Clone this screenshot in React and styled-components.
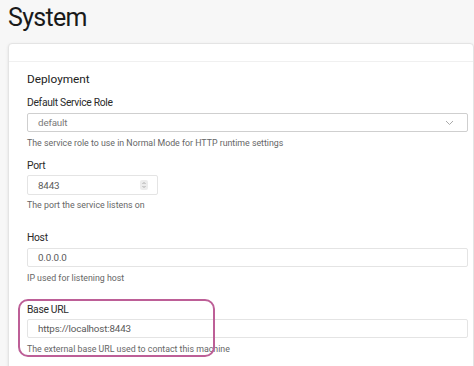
import styled, { createGlobalStyle } from 'styled-components';

const Global = createGlobalStyle`
  html, body {
    margin: 0;
    padding: 0;
    background: #f7f7f7;
    font-family: Roboto, "Liberation Sans", Arial, sans-serif;
    color: #222;
    overflow: hidden;
  }
`;

const Page = styled.div`
  width: 474px;
  height: 366px;
  overflow: hidden;
`;

const Title = styled.h1`
  margin: 0;
  padding: 3px 0 0 8px;
  height: 43px;
  box-sizing: border-box;
  font-size: 25px;
  font-weight: 400;
  line-height: 30px;
  letter-spacing: -0.7px;
  color: #1a1a1a;
`;

const Card = styled.div`
  margin-left: 8px;
  width: 464px;
  height: 400px;
  background: #fff;
  border: 1px solid #e4e4e4;
  border-radius: 4px 4px 0 0;
  box-shadow: 0 1px 3px rgba(0, 0, 0, 0.1);
`;

const CardHeader = styled.div`
  height: 17px;
  border-bottom: 1px solid #f0f0f0;
`;

const CardBody = styled.div`
  padding: 10px 4px 0 18px;
`;

const Section = styled.h2`
  margin: 0 0 10px;
  font-size: 11.8px;
  font-weight: 400;
  line-height: 14px;
  color: #222;
`;

const Field = styled.div`
  position: relative;
  margin-top: ${p => p.$gap || 0}px;
`;

const Label = styled.div`
  font-size: 10.3px;
  line-height: 14px;
  letter-spacing: -0.3px;
  color: #2a2a2a;
  margin-bottom: ${p => p.$space ?? 3}px;
`;

const InputBox = styled.div`
  position: relative;
  display: flex;
  align-items: center;
  box-sizing: border-box;
  width: ${p => p.$width || '441px'};
  height: ${p => p.$height || 19}px;
  padding-left: 10px;
  border: 1px solid ${p => p.$strong ? '#cfcfcf' : '#e4e4e4'};
  border-radius: 2px;
  background: #fff;
  font-size: 9.8px;
  letter-spacing: -0.15px;
  color: ${p => p.$muted ? '#7a7a7a' : '#5a5a5a'};
`;

const Help = styled.div`
  margin-top: ${p => p.$space ?? 5}px;
  font-size: 8.8px;
  line-height: 12px;
  color: #666;
`;

const Chevron = styled.svg`
  position: absolute;
  right: 13px;
  top: 6px;
`;

const Spinner = styled.div`
  position: absolute;
  right: 9px;
  top: 4px;
  width: 8px;
  height: 10px;
  border-radius: 2px;
  background: #ececec;
  display: flex;
  align-items: center;
  justify-content: center;
`;

const Highlight = styled.div`
  position: absolute;
  left: -9px;
  top: -4px;
  width: 197px;
  height: 58px;
  box-sizing: border-box;
  border: 2px solid #bd5f97;
  border-radius: 10px;
  pointer-events: none;
`;

export default function App() {
  return (
    <Page>
      <Global />
      <Title>System</Title>
      <Card>
        <CardHeader />
        <CardBody>
          <Section>Deployment</Section>

          <Field>
            <Label>Default Service Role</Label>
            <InputBox $strong $muted>
              default
              <Chevron width="9" height="6" viewBox="0 0 9 6">
                <path d="M1 1l3.5 3.5L8 1" fill="none" stroke="#aaa" strokeWidth="1" />
              </Chevron>
            </InputBox>
            <Help>The service role to use in Normal Mode for HTTP runtime settings</Help>
          </Field>

          <Field $gap={10}>
            <Label $space={2}>Port</Label>
            <InputBox $width="131px" $height={20}>
              8443
              <Spinner>
                <svg width="6" height="8" viewBox="0 0 6 8">
                  <path d="M1.5 3L3 1.5 4.5 3M1.5 5L3 6.5 4.5 5" fill="none" stroke="#999" strokeWidth="0.8" />
                </svg>
              </Spinner>
            </InputBox>
            <Help $space={4}>The port the service listens on</Help>
          </Field>

          <Field $gap={20}>
            <Label>Host</Label>
            <InputBox>0.0.0.0</InputBox>
            <Help>IP used for listening host</Help>
          </Field>

          <Field $gap={19}>
            <Label $space={2}>Base URL</Label>
            <InputBox>https://localhost:8443</InputBox>
            <Help>The external base URL used to contact this machine</Help>
            <Highlight />
          </Field>
        </CardBody>
      </Card>
    </Page>
  );
}
